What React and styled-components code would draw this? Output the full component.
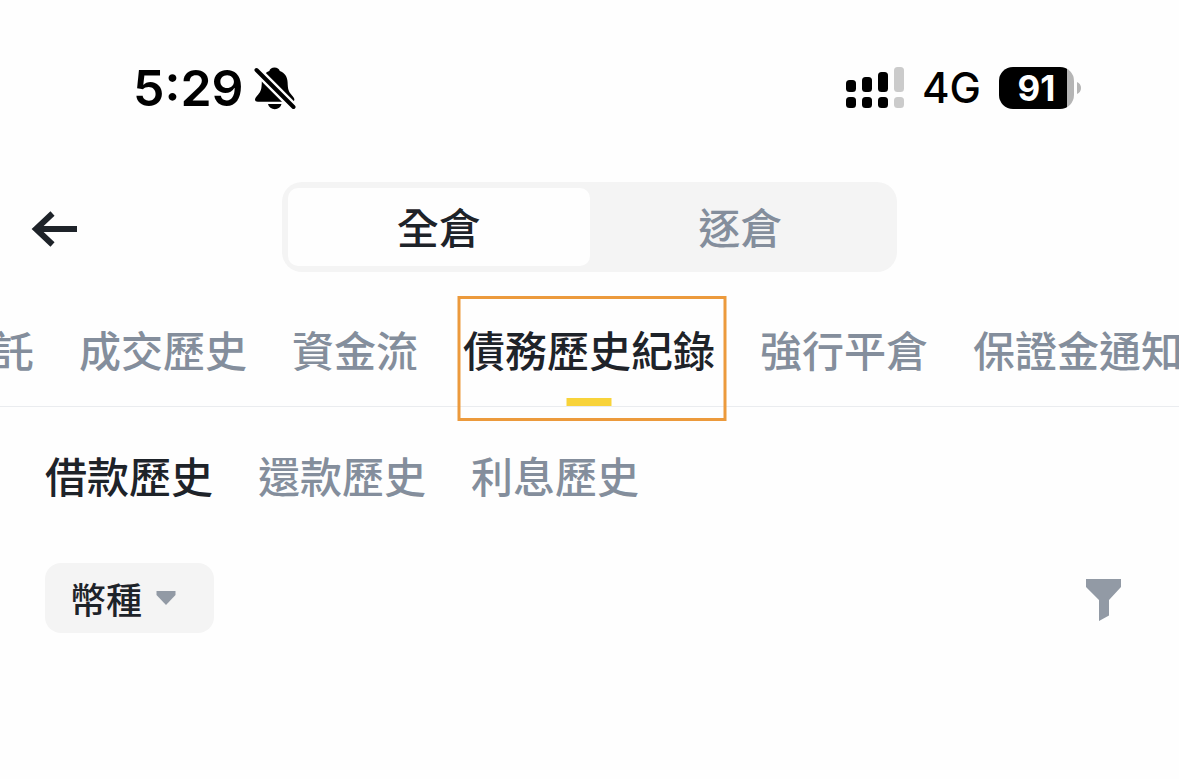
import React, { useLayoutEffect, useRef, useState } from 'react'
import styled, { createGlobalStyle } from 'styled-components'

const GlobalStyle = createGlobalStyle`
    * {
        box-sizing: border-box;
    }
    body {
        margin: 0;
        background: #fefefe;
        color: #1e2329;
        font-family: "Noto Sans CJK TC", sans-serif;
    }
    button, select {
        margin: 0;
        padding: 0;
        border: 0;
        background: none;
        font: inherit;
        color: inherit;
        cursor: pointer;
    }
`

const StatusBar = styled.div`
    display: flex;
    align-items: center;
    justify-content: space-between;
    height: 176px;
    padding: 0 98px 0 133px;
    color: #000;
    font-family: Inter, sans-serif;
`

const StatusGroup = styled.div`
    display: flex;
    align-items: center;
    gap: ${props => props.$gap}px;
`

const Clock = styled.time`
    font-size: 50px;
    line-height: 60px;
    font-weight: 600;
`

const Network = styled.span`
    font-size: 42px;
    line-height: 60px;
    font-weight: 500;
`

const Battery = styled.div`
    display: flex;
    align-items: center;
    gap: 3px;
`

const BatteryBody = styled.div`
    width: 75px;
    height: 42px;
    border-radius: 14px;
    background: linear-gradient(to right, #000 91%, #b5b5b5 91%);
    color: #fff;
    font-size: 35px;
    line-height: 42px;
    font-weight: 700;
    text-align: center;
`

const Header = styled.header`
    display: grid;
    grid-template-columns: 1fr minmax(0, 615px) 1fr;
    align-items: center;
    margin-top: 6px;
`

const BackButton = styled.button`
    display: flex;
    justify-self: start;
    padding: 8px 30px;
`

const Segmented = styled.div`
    display: flex;
    height: 90px;
    padding: 6px;
    border-radius: 20px;
    background: #f4f4f4;
`

const Segment = styled.button`
    flex: 1;
    padding-bottom: 2px;
    border-radius: 10px;
    background: ${props => props.$active ? '#fefefe' : 'transparent'};
    color: ${props => props.$active ? '#1e2329' : '#848e9c'};
    font-size: 42px;
    line-height: 60px;
    font-weight: 500;
`

const TabBar = styled.nav`
    position: relative;
    margin-top: 25px;
    border-bottom: 1px solid #eaecef;
`

const TabScroller = styled.div`
    display: flex;
    gap: 45px;
    overflow-x: auto;
    scrollbar-width: none;
`

const Tab = styled.button`
    position: relative;
    flex: none;
    height: ${props => props.$height}px;
    padding-bottom: 6px;
    color: ${props => props.$active ? '#1e2329' : '#848e9c'};
    font-size: 42px;
    line-height: 60px;
    font-weight: 500;
    white-space: nowrap;
`

const Underline = styled.span`
    position: absolute;
    bottom: 0;
    left: 50%;
    width: 45px;
    height: 8px;
    transform: translateX(-50%);
    background: #f8d33a;
`

const Highlight = styled.div`
    position: absolute;
    top: -1px;
    bottom: -15px;
    left: calc(50% + 2px);
    width: 269px;
    transform: translateX(-50%);
    border: 3px solid #ec9a3c;
    pointer-events: none;
`

const SubTabs = styled.div`
    display: flex;
    flex-wrap: wrap;
    gap: 0 45px;
    padding: 26px 45px 0;
`

const Filters = styled.div`
    display: flex;
    align-items: center;
    justify-content: space-between;
    padding: 40px 57px 0 45px;
`

const Chip = styled.label`
    display: flex;
    align-items: center;
    gap: 13px;
    height: 70px;
    padding: 0 38px 0 25px;
    border-radius: 16px;
    background: #f4f4f4;
`

const ChipSelect = styled.select`
    appearance: none;
    font-size: 36px;
    line-height: 52px;
    font-weight: 500;
`

const IconButton = styled.button`
    display: flex;
`

const MutedBell = () => (
    <svg width="42" height="44" viewBox="0 0 42 44" aria-hidden="true">
        <path d="M20.5 1.5c2.8 0 4.6 1.4 5.3 3.5 5 1.8 7.6 5.8 7.8 11.2.3 7 .8 9.2 3.6 12.2 1.8 2 3.2 3.5 3.2 5.2 0 1.4-1.2 2.2-2.800 2.200H3.800C2.200 35.800 1 35 1 33.600c0-1.700 1.400-3.200 3.200-5.200 2.800-3 3.300-5.200 3.600-12.200C8 10.800 10.500 6.800 15.300 5c.7-2.100 2.400-3.500 5.200-3.500z" />
        <path d="M14 38h13.500c-.8 3.300-3.300 5.200-6.700 5.200S14.800 41.300 14 38z" />
        <path d="M0 1.500L41 42.500" stroke="#fefefe" strokeWidth="9" />
        <path d="M2.500 4L39.500 41" stroke="#000" strokeWidth="4" strokeLinecap="round" />
    </svg>
)

const Signal = () => (
    <svg width="58" height="42" viewBox="0 0 58 42" aria-hidden="true">
        <rect x="0" y="13" width="10" height="12" rx="3.5" />
        <rect x="16" y="10" width="10" height="15" rx="3.5" />
        <rect x="32" y="5" width="10" height="20" rx="3.5" />
        <rect x="48" y="0" width="10" height="25" rx="3.5" fill="#cbcbcb" />
        <rect x="0" y="30" width="10" height="11" rx="3.5" />
        <rect x="16" y="30" width="10" height="11" rx="3.5" />
        <rect x="32" y="30" width="10" height="11" rx="3.5" />
        <rect x="48" y="30" width="10" height="11" rx="3.5" fill="#cbcbcb" />
    </svg>
)

const BatteryTip = () => (
    <svg width="4" height="12" viewBox="0 0 4 12" aria-hidden="true">
        <path d="M0 0c2.5 1 4 3.3 4 6s-1.5 5-4 6z" fill="#b5b5b5" />
    </svg>
)

const BackArrow = () => (
    <svg width="48" height="42" viewBox="0 -4 48 42" fill="none" stroke="#1e2329" strokeWidth="6" aria-hidden="true">
        <path d="M22.5 3.500L6 19l16.500 15.500M6 19h41" />
    </svg>
)

const Caret = () => (
    <svg width="20" height="14" viewBox="0 0 20 14" fill="#929aa5" aria-hidden="true">
        <path d="M0.500 0h19v4L10 14 0.500 4z" />
    </svg>
)

const Funnel = () => (
    <svg width="37" height="46" viewBox="0 -4 37 46" fill="#929aa5" aria-hidden="true">
        <path d="M1 0h35v8L24 21v15.500L14 42V21L1 8z" />
    </svg>
)

const modes = ['全倉', '逐倉']
const tabs = ['歷史委託', '成交歷史', '資金流', '債務歷史紀錄', '強行平倉', '保證金通知']
const subTabs = ['借款歷史', '還款歷史', '利息歷史']

const HistoryTabs = () => {

    const [active, setActive] = useState('債務歷史紀錄')
    const scroller = useRef(null)
    const current = useRef(null)

    // keep the selected tab in the middle of the strip
    useLayoutEffect(() => {
        const center = () => {
            const box = scroller.current
            const tab = current.current
            box.scrollLeft = Math.round(tab.offsetLeft + tab.offsetWidth / 2 - box.clientWidth / 2)
        }
        center()
        window.addEventListener('resize', center)
        return () => window.removeEventListener('resize', center)
    }, [active])

    return (
        <TabBar>
            <TabScroller ref={scroller}>
                { tabs.map(tab => (
                    <Tab
                        key={tab}
                        ref={tab === active ? current : null}
                        $height={109}
                        $active={tab === active}
                        onClick={() => setActive(tab)}
                    >
                        { tab }
                        { tab === active && <Underline /> }
                    </Tab>
                )) }
            </TabScroller>
            { active === '債務歷史紀錄' && <Highlight /> }
        </TabBar>
    )
}

const App = () => {

    const [mode, setMode] = useState('全倉')
    const [subTab, setSubTab] = useState('借款歷史')

    return (
        <>
            <GlobalStyle />
            <StatusBar>
                <StatusGroup $gap={10}>
                    <Clock>5:29</Clock>
                    <MutedBell />
                </StatusGroup>
                <StatusGroup $gap={18}>
                    <Signal />
                    <Network>4G</Network>
                    <Battery>
                        <BatteryBody>91</BatteryBody>
                        <BatteryTip />
                    </Battery>
                </StatusGroup>
            </StatusBar>
            <Header>
                <BackButton aria-label="返回"><BackArrow /></BackButton>
                <Segmented>
                    { modes.map(item => (
                        <Segment key={item} $active={item === mode} onClick={() => setMode(item)}>{ item }</Segment>
                    )) }
                </Segmented>
            </Header>
            <main>
                <HistoryTabs />
                <SubTabs>
                    { subTabs.map(item => (
                        <Tab key={item} $height={90} $active={item === subTab} onClick={() => setSubTab(item)}>{ item }</Tab>
                    )) }
                </SubTabs>
                <Filters>
                    <Chip>
                        <ChipSelect aria-label="幣種">
                            <option>幣種</option>
                        </ChipSelect>
                        <Caret />
                    </Chip>
                    <IconButton aria-label="篩選"><Funnel /></IconButton>
                </Filters>
            </main>
        </>
    )
}

export default App
